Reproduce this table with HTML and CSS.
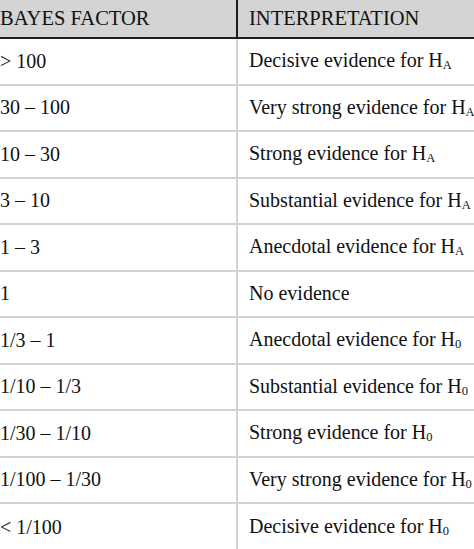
FILE: index.html
```html
<!DOCTYPE html>
<html>
<head>
<meta charset="utf-8">
<link rel="stylesheet" href="styles.css">
</head>
<body>
<table class="bf">
  <thead>
    <tr><th class="c1">BAYES FACTOR</th><th class="c2">INTERPRETATION</th></tr>
  </thead>
  <tbody>
    <tr><td class="c1">&gt; 100</td><td class="c2">Decisive evidence for H<sub>A</sub></td></tr>
    <tr><td class="c1">30 – 100</td><td class="c2">Very strong evidence for H<sub>A</sub></td></tr>
    <tr><td class="c1">10 – 30</td><td class="c2">Strong evidence for H<sub>A</sub></td></tr>
    <tr><td class="c1">3 – 10</td><td class="c2">Substantial evidence for H<sub>A</sub></td></tr>
    <tr><td class="c1">1 – 3</td><td class="c2">Anecdotal evidence for H<sub>A</sub></td></tr>
    <tr><td class="c1">1</td><td class="c2">No evidence</td></tr>
    <tr><td class="c1">1/3 – 1</td><td class="c2">Anecdotal evidence for H<sub>0</sub></td></tr>
    <tr><td class="c1">1/10 – 1/3</td><td class="c2">Substantial evidence for H<sub>0</sub></td></tr>
    <tr><td class="c1">1/30 – 1/10</td><td class="c2">Strong evidence for H<sub>0</sub></td></tr>
    <tr><td class="c1">1/100 – 1/30</td><td class="c2">Very strong evidence for H<sub>0</sub></td></tr>
    <tr><td class="c1">&lt; 1/100</td><td class="c2">Decisive evidence for H<sub>0</sub></td></tr>
  </tbody>
</table>
</body>
</html>
```

FILE: styles.css
```css
html, body {
  margin: 0;
  padding: 0;
  background: #ffffff;
}
.bf {
  border-collapse: collapse;
  width: 476px;
  table-layout: fixed;
  font-family: "Liberation Serif", "Times New Roman", serif;
  color: #111111;
}
.bf th {
  background: #d4d4d4;
  font-weight: normal;
  font-size: 20.5px;
  text-align: left;
  height: 37px;
  padding: 0;
  border-bottom: 2px solid #1e1e1e;
  vertical-align: middle;
}
.bf th.c1 {
  border-right: 2px solid #1e1e1e;
}
.bf td {
  font-size: 20px;
  height: 44.5px;
  padding: 0;
  border-bottom: 2px solid #d2d2d2;
  vertical-align: middle;
}
.bf tbody tr:last-child td {
  border-bottom: none;
  height: 46.5px;
}
.bf td.c1 {
  border-right: 2px solid #d2d2d2;
}
.bf .c1 {
  width: 236px;
  padding-left: 0;
}
.bf .c2 {
  padding-left: 11px;
}
.bf sub {
  font-size: 12.5px;
  vertical-align: -2px;
}
```
